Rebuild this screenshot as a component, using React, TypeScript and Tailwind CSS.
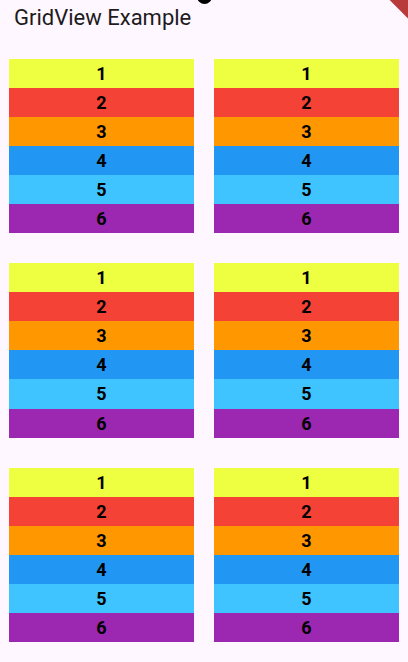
const rows = [
  { label: '1', color: 'bg-[#eeff41]' },
  { label: '2', color: 'bg-[#f44336]' },
  { label: '3', color: 'bg-[#ff9800]' },
  { label: '4', color: 'bg-[#2196f3]' },
  { label: '5', color: 'bg-[#40c4ff]' },
  { label: '6', color: 'bg-[#9c27b0]' },
];

function ColorStack() {
  return (
    <div className="flex flex-col">
      {rows.map((row) => (
        <div
          key={row.label}
          className={`flex h-[29.1px] items-center justify-center text-[18px] font-bold text-black ${row.color}`}
        >
          {row.label}
        </div>
      ))}
    </div>
  );
}

export default function App() {
  return (
    <div className="relative h-[662px] overflow-hidden bg-[#fef7ff] font-['Roboto',sans-serif]">
      {/* camera cutout peeking in at the top */}
      <div className="absolute left-[197px] top-[-11px] h-[15px] w-[15px] rounded-full bg-black" />

      {/* debug banner corner */}
      <div className="absolute left-[368px] top-[-13px] h-[26px] w-[80px] rotate-45 bg-[#b83a3a]" />

      <h1 className="pl-[14px] pt-[4px] text-[22px] leading-[28px] font-normal text-[#1d1b20]">
        GridView Example
      </h1>

      <div className="mt-[26.5px] grid grid-cols-2 gap-x-[20px] gap-y-[30px] px-[9px]">
        {Array.from({ length: 6 }).map((_, i) => (
          <ColorStack key={i} />
        ))}
      </div>
    </div>
  );
}
